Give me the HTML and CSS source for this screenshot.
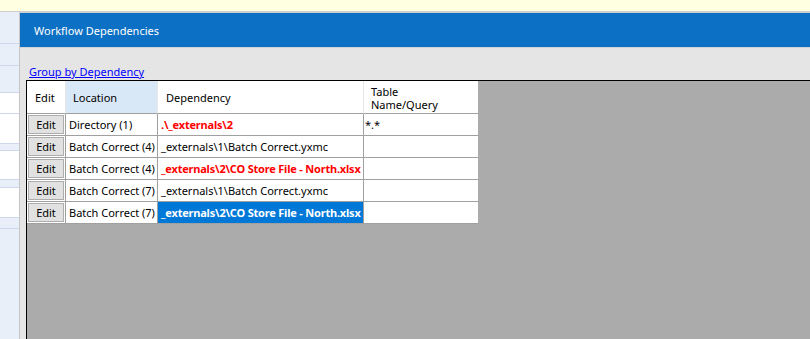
FILE: index.html
```html
<!DOCTYPE html>
<html lang="en">
<head>
    <meta charset="UTF-8">
    <title>Workflow Dependencies</title>
    <link rel="stylesheet" href="styles.css">
</head>
<body>
    <div class="topbar"></div>

    <div class="workspace">
        <aside class="side">
            <div class="side-row h31"></div>
            <div class="side-row h21"></div>
            <div class="side-row h26"></div>
            <div class="side-row h20 white"></div>
            <div class="side-row h29 white"></div>
            <div class="side-row h6"></div>
            <div class="side-row h28 white"></div>
            <div class="side-row h7"></div>
            <div class="side-row h29 white"></div>
            <div class="side-row h10"></div>
        </aside>

        <section class="dialog">
            <header class="dialog-title">Workflow Dependencies</header>
            <div class="dialog-body">
                <a class="group-link" href="#">Group by Dependency</a>
                <div class="grid">
                    <table class="deps">
                        <thead>
                            <tr>
                                <th class="col-edit">Edit</th>
                                <th class="col-loc sorted">Location</th>
                                <th class="col-dep">Dependency</th>
                                <th class="col-table">Table<br>Name/Query</th>
                            </tr>
                        </thead>
                        <tbody>
                            <tr>
                                <td class="btn-cell"><button class="edit-btn">Edit</button></td>
                                <td>Directory (1)</td>
                                <td class="missing">.\_externals\2</td>
                                <td>*.*</td>
                            </tr>
                            <tr>
                                <td class="btn-cell"><button class="edit-btn">Edit</button></td>
                                <td>Batch Correct (4)</td>
                                <td>_externals\1\Batch Correct.yxmc</td>
                                <td></td>
                            </tr>
                            <tr>
                                <td class="btn-cell"><button class="edit-btn">Edit</button></td>
                                <td>Batch Correct (4)</td>
                                <td class="missing">_externals\2\CO Store File - North.xlsx</td>
                                <td></td>
                            </tr>
                            <tr>
                                <td class="btn-cell"><button class="edit-btn">Edit</button></td>
                                <td>Batch Correct (7)</td>
                                <td>_externals\1\Batch Correct.yxmc</td>
                                <td></td>
                            </tr>
                            <tr>
                                <td class="btn-cell"><button class="edit-btn">Edit</button></td>
                                <td>Batch Correct (7)</td>
                                <td class="selected">_externals\2\CO Store File - North.xlsx</td>
                                <td></td>
                            </tr>
                        </tbody>
                    </table>
                </div>
            </div>
        </section>
    </div>
</body>
</html>
```

FILE: styles.css
```css
/* base */
* {
    margin: 0;
    padding: 0;
    box-sizing: border-box;
}

body {
    width: 810px;
    height: 339px;
    overflow: hidden;
    font-family: "Noto Sans", "Open Sans", sans-serif;
    font-size: 11px;
    color: #000;
    background: #e9eff9;
}

.topbar {
    height: 12px;
    background: #ffffe1;
    border-bottom: 1px solid #cfcfcf;
}

.workspace {
    display: flex;
    height: 327px;
}

/* left list behind the dialog */
.side {
    width: 19px;
    flex-shrink: 0;
    background: #e9eff9;
}

.side-row {
    background: #e9eff9;
    border-bottom: 1px solid #cdd8ea;
}

.side-row.white { background: #fff; }
.h6 { height: 7px; }
.h7 { height: 8px; }
.h10 { height: 11px; }
.h20 { height: 21px; }
.h21 { height: 22px; }
.h26 { height: 27px; }
.h28 { height: 29px; }
.h29 { height: 30px; }
.h31 { height: 32px; }

/* dialog */
.dialog {
    flex: 1;
    display: flex;
    flex-direction: column;
    background: #e5e5e5;
    border-left: 1px solid #c6c6c6;
    border-top: 1px solid #cfcfcf;
}

.dialog-title {
    height: 35px;
    line-height: 36px;
    padding-left: 14px;
    background: #0c70c4;
    color: #fff;
    border-bottom: 1px solid #d4d4d4;
}

.dialog-body {
    flex: 1;
    display: flex;
    flex-direction: column;
    padding-top: 16px;
}

.group-link {
    display: block;
    height: 16px;
    line-height: 16px;
    padding-left: 9px;
    color: #0000ff;
    text-decoration: underline;
}

.grid {
    flex: 1;
    margin-left: 6px;
    background: #ababab;
    border-top: 1px solid #000;
    border-left: 1px solid #000;
}

/* dependency table */
.deps {
    border-collapse: separate;
    border-spacing: 0;
    table-layout: fixed;
    width: 451px;
    background: #fff;
}

.deps th {
    height: 33px;
    font-weight: normal;
    text-align: left;
    vertical-align: middle;
    line-height: 13px;
    padding: 0 0 0 7px;
    border-right: 1px solid #e6e6e6;
    border-bottom: 1px solid #a0a0a0;
}

.deps th.sorted { background: #d9e8f6; }
.deps .col-edit { width: 39px; padding-left: 8px; }
.deps .col-loc { width: 92px; }
.deps .col-dep { width: 206px; padding-left: 8px; }
.deps .col-table { width: 114px; border-right: 0; padding-top: 2px; }

.deps td {
    height: 22px;
    padding: 0 0 0 3px;
    white-space: nowrap;
    border-right: 1px solid #a0a0a0;
    border-bottom: 1px solid #a0a0a0;
}

.deps td:last-child { border-right: 0; padding-left: 1px; }

.deps td.btn-cell { padding: 1px; }

.edit-btn {
    display: block;
    width: 100%;
    height: 19px;
    font: inherit;
    color: #000;
    background: #e1e1e1;
    border: 1px solid #adadad;
}

.deps td.missing,
.deps td.selected {
    font-weight: bold;
    letter-spacing: -0.2px;
}

.deps td.missing { color: #ff0000; }

.deps td.selected {
    background: #0078d7;
    color: #fff;
}
```
